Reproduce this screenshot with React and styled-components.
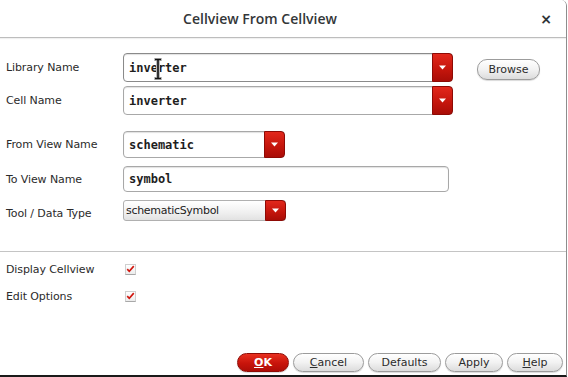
import React from "react";
import styled, { createGlobalStyle } from "styled-components";

const GlobalStyle = createGlobalStyle`
  html, body { margin: 0; padding: 0; background: #ffffff; }
  body { font-family: "DejaVu Sans", sans-serif; }
`;

const Window = styled.div`
  width: 566px;
  height: 375px;
  border-right: 1px solid #8d8d8d;
  border-bottom: 2px solid #1a1a1a;
  border-top-right-radius: 6px;
  background: #ffffff;
  display: flex;
  flex-direction: column;
  overflow: hidden;
`;

const TitleBar = styled.div`
  height: 37px;
  flex: none;
  border-bottom: 1px solid #bdbdbd;
  box-shadow: 0 1px 1px rgba(0, 0, 0, 0.06);
  display: grid;
  grid-template-columns: 1fr auto 1fr;
  align-items: center;
  background: #ffffff;
`;

const Title = styled.div`
  grid-column: 2;
  margin-right: 46px;
  font-family: "Open Sans", sans-serif;
  font-weight: 600;
  font-size: 14px;
  color: #333638;
`;

const Close = styled.div`
  grid-column: 3;
  justify-self: end;
  margin-right: 14px;
  font-family: "DejaVu Sans", sans-serif;
  font-weight: 700;
  font-size: 14px;
  color: #2e3436;
`;

const Form = styled.div`
  display: flex;
  flex-direction: column;
  padding-top: ${(p) => p.$pt}px;
`;

const Row = styled.div`
  display: flex;
  align-items: center;
  height: ${(p) => p.$h}px;
  margin-top: ${(p) => p.$mt || 0}px;
  position: relative;
`;

const Label = styled.div`
  width: 117px;
  padding-left: 6px;
  flex: none;
  font-family: "DejaVu Sans", sans-serif;
  font-size: 11px;
  color: #2b2b2b;
  letter-spacing: -0.1px;
  padding-top: ${(p) => p.$dy || 0}px;
`;

const Field = styled.div`
  position: relative;
  width: ${(p) => p.$w}px;
  height: 100%;
  box-sizing: border-box;
  border: 1px solid ${(p) => (p.$dark ? "#8a8a8a" : "#a8a8a8")};
  border-radius: 4px;
  background: #ffffff;
  box-shadow: inset 0 1px 1px rgba(0, 0, 0, 0.12);
  display: flex;
  align-items: center;
  font-family: "DejaVu Sans Mono", monospace;
  font-weight: 700;
  font-size: 12px;
  color: #1e1e1e;
  padding-left: 5px;
`;

const FieldText = styled.span`
  flex: 1;
`;

const DropButton = styled.div`
  width: 21px;
  align-self: stretch;
  margin: -1px -1px -1px 0;
  border-radius: 0 4px 4px 0;
  background: linear-gradient(#e2281c, #c3150c 60%, #a90d07);
  border: 1px solid #8e0a05;
  box-sizing: border-box;
  display: flex;
  align-items: center;
  justify-content: center;
`;

const Arrow = () => (
  <svg width="7" height="5" viewBox="0 0 7 5">
    <path d="M0 0.5 L7 0.5 L3.5 4.5 Z" fill="#ffffff" />
  </svg>
);

const Combo = styled.div`
  width: ${(p) => p.$w}px;
  height: 100%;
  box-sizing: border-box;
  border: 1px solid #b0b0b0;
  border-radius: 3px;
  background: linear-gradient(#ffffff, #f0f0f0 60%, #e2e2e2);
  display: flex;
  align-items: center;
  padding-left: 2px;
  font-family: "DejaVu Sans", sans-serif;
  font-size: 11px;
  letter-spacing: -0.3px;
  color: #222;
`;

const Cursor = styled.svg`
  position: absolute;
  left: 28px;
  top: 4px;
  pointer-events: none;
`;

const PillButton = styled.div`
  height: ${(p) => p.$h || 19}px;
  width: ${(p) => p.$w}px;
  box-sizing: border-box;
  border-radius: 10px;
  border: 1px solid ${(p) => (p.$primary ? "#8f0c06" : "#9c9c9c")};
  background: ${(p) =>
    p.$primary
      ? "linear-gradient(#e8301f, #c8140b 55%, #ae0d07)"
      : "linear-gradient(#ffffff, #f2f2f2 50%, #dcdcdc)"};
  box-shadow: 0 1px 1px rgba(0, 0, 0, 0.15);
  display: flex;
  align-items: center;
  justify-content: center;
  font-family: "DejaVu Sans", sans-serif;
  font-size: 11px;
  font-weight: ${(p) => (p.$primary ? 700 : 400)};
  color: ${(p) => (p.$primary ? "#ffffff" : "#2b2b2b")};
  flex: none;
`;

const BrowseWrap = styled.div`
  margin-left: 24px;
  margin-top: 4px;
`;

const Separator = styled.div`
  height: 1px;
  background: #c4c4c4;
  margin-top: ${(p) => p.$mt}px;
`;

const CheckBox = styled.div`
  width: 11px;
  height: 11px;
  box-sizing: border-box;
  margin-left: 2px;
  border: 1px solid #cfcfcf;
  border-bottom-color: #a8a8a8;
  background: linear-gradient(#ffffff, #ececec);
  display: flex;
  align-items: center;
  justify-content: center;
`;

const Check = () => (
  <svg width="11" height="10" viewBox="0 0 11 10">
    <path d="M1.5 5.2 L4 7.8 L9.5 1.5" fill="none" stroke="#d0160e" strokeWidth="2" />
  </svg>
);

const Footer = styled.div`
  margin-top: auto;
  padding-bottom: 3px;
  padding-right: 3px;
  display: flex;
  justify-content: flex-end;
  gap: 4px;
`;

const U = styled.span`
  text-decoration: underline;
`;

export default function App() {
  return (
    <>
      <GlobalStyle />
      <Window>
        <TitleBar>
          <Title>Cellview From Cellview</Title>
          <Close>×</Close>
        </TitleBar>
        <Form $pt={15}>
          <Row $h={29}>
            <Label>Library Name</Label>
            <Field $w={330} $dark>
              <FieldText>inverter</FieldText>
              <DropButton><Arrow /></DropButton>
              <Cursor width="12" height="22" viewBox="0 0 12 22">
                <path d="M2 1 H10 M6 1 V21 M2 21 H10" stroke="#bdbdbd" strokeWidth="4" fill="none" />
                <path d="M3 1.5 H9 M6 1.5 V20.5 M3 20.5 H9" stroke="#111" strokeWidth="1.6" fill="none" />
              </Cursor>
            </Field>
            <BrowseWrap>
              <PillButton $w={63} $h={21}>Browse</PillButton>
            </BrowseWrap>
          </Row>
          <Row $h={29} $mt={4}>
            <Label>Cell Name</Label>
            <Field $w={330}>
              <FieldText>inverter</FieldText>
              <DropButton><Arrow /></DropButton>
            </Field>
          </Row>
          <Row $h={27} $mt={16}>
            <Label>From View Name</Label>
            <Field $w={162}>
              <FieldText>schematic</FieldText>
              <DropButton><Arrow /></DropButton>
            </Field>
          </Row>
          <Row $h={26} $mt={8}>
            <Label>To View Name</Label>
            <Field $w={326}>
              <FieldText>symbol</FieldText>
            </Field>
          </Row>
          <Row $h={21} $mt={8}>
            <Label $dy={6}>Tool / Data Type</Label>
            <Combo $w={163}>
              <FieldText>schematicSymbol</FieldText>
              <DropButton><Arrow /></DropButton>
            </Combo>
          </Row>
          <Separator $mt={30} />
          <Row $h={20} $mt={7}>
            <Label>Display Cellview</Label>
            <CheckBox><Check /></CheckBox>
          </Row>
          <Row $h={20} $mt={7}>
            <Label>Edit Options</Label>
            <CheckBox><Check /></CheckBox>
          </Row>
        </Form>
        <Footer>
          <PillButton $primary $w={52}><U>O</U>K</PillButton>
          <PillButton $w={71}><U>C</U>ancel</PillButton>
          <PillButton $w={73}>Defaults</PillButton>
          <PillButton $w={58}>Apply</PillButton>
          <PillButton $w={56}><U>H</U>elp</PillButton>
        </Footer>
      </Window>
    </>
  );
}
